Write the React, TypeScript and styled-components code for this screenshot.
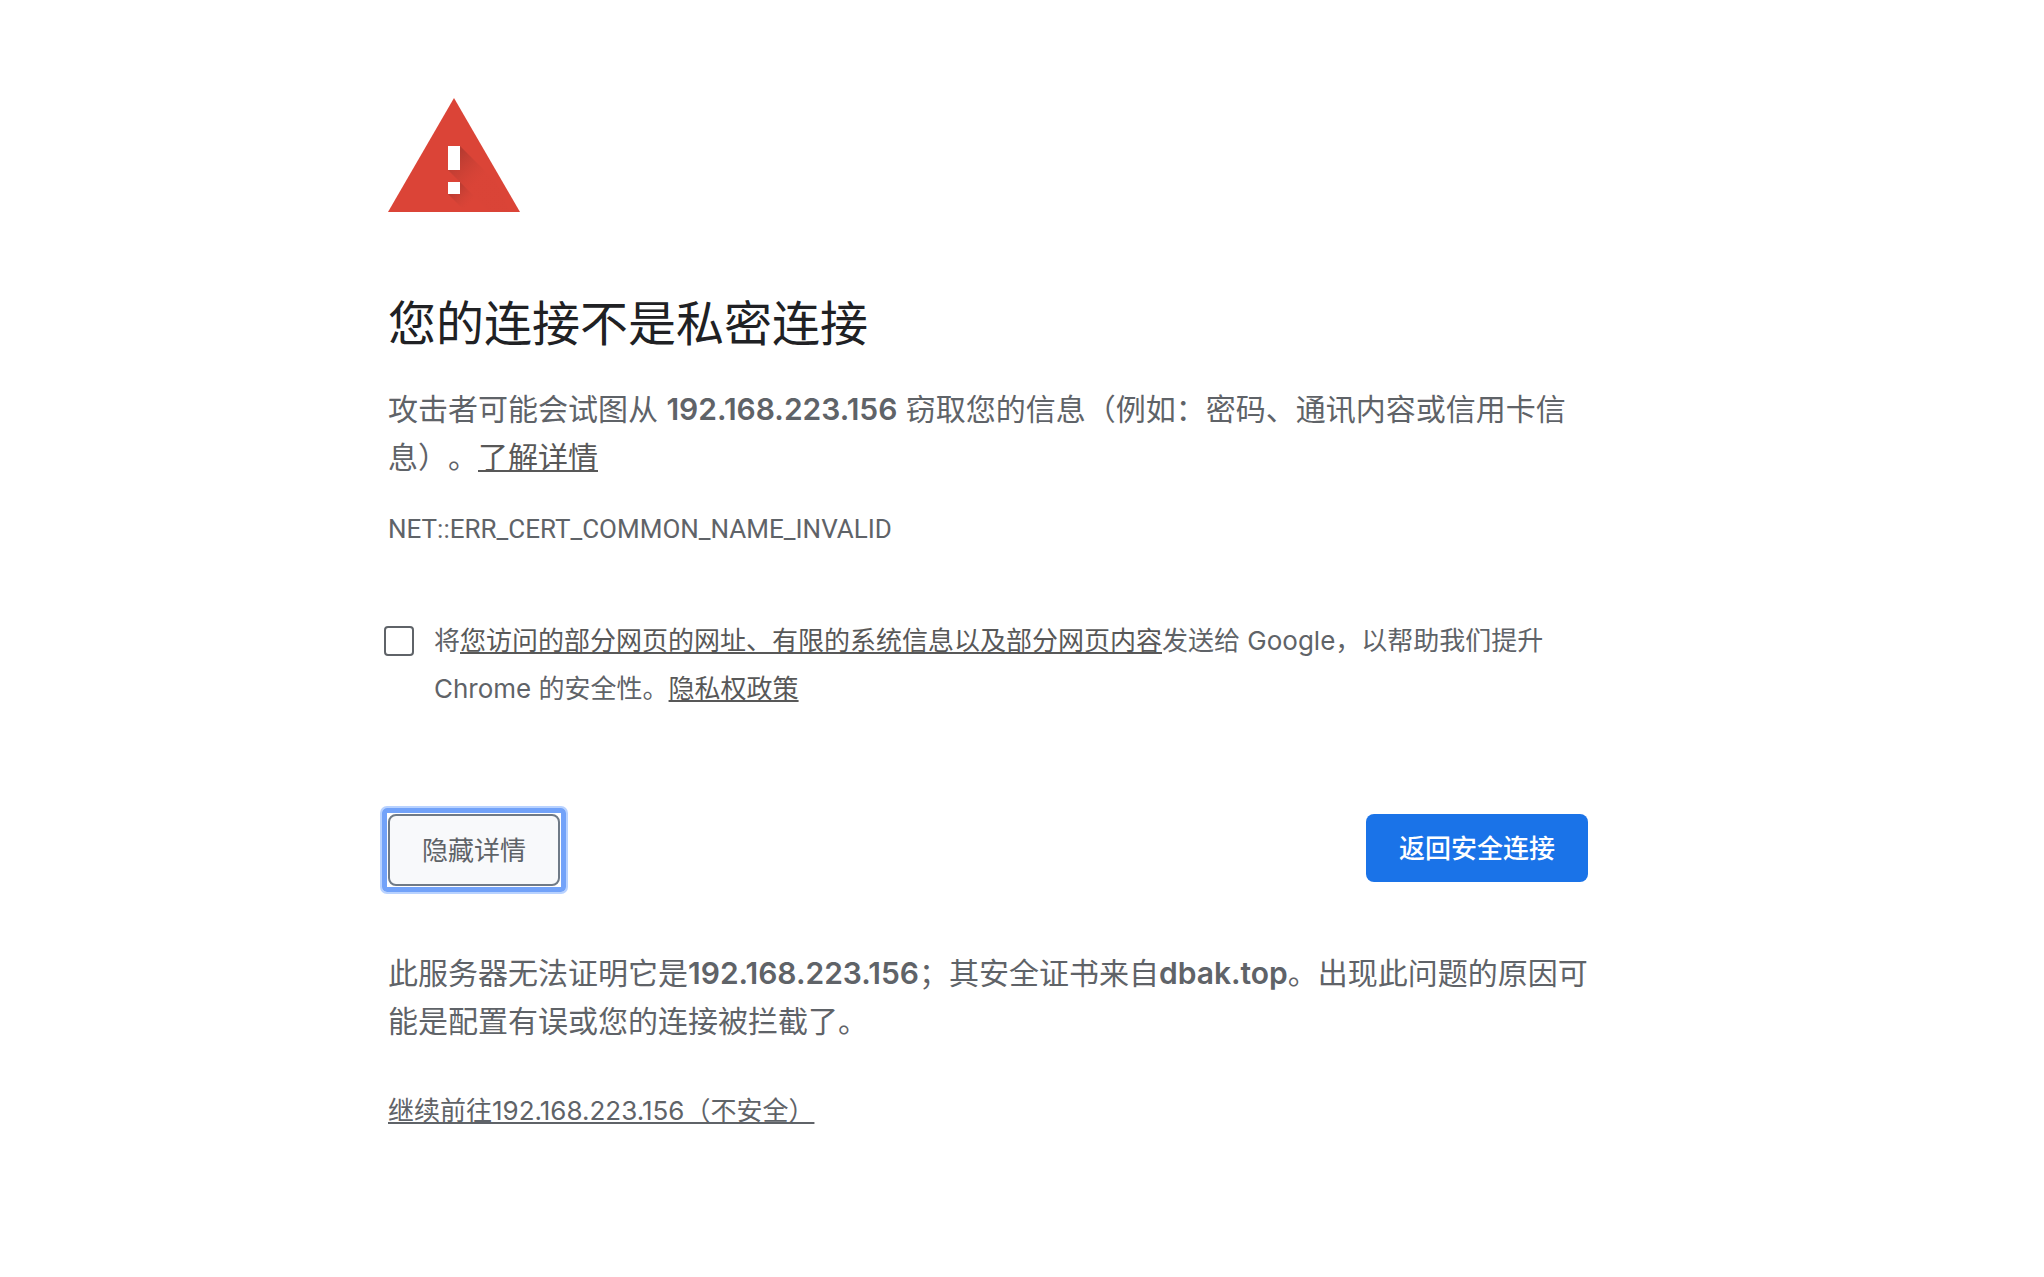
import React, { useState } from 'react';
import styled, { createGlobalStyle } from 'styled-components';

const GlobalStyle = createGlobalStyle`
  *, *::before, *::after { box-sizing: border-box; }
  body {
    margin: 0;
    background: #fff;
    color: #5f6368;
    font-family: Inter, 'Noto Sans CJK SC', sans-serif;
    font-size: 30px;
    line-height: 48px;
    text-spacing-trim: space-all;
  }
`;

const Page = styled.div`
  padding: 98px 68px 48px 0;
`;

const Content = styled.main`
  max-width: 1200px;
  margin: 0 auto;
`;

const WarningIcon = styled.svg`
  display: block;
  width: 132px;
  height: 114px;
`;

const Title = styled.h1`
  margin: 82px 0 31px;
  color: #202124;
  font-size: 48px;
  font-weight: 400;
  line-height: 60px;
`;

const Paragraph = styled.p`
  margin: 0;
`;

const Strong = styled.strong`
  font-weight: 600;
`;

const ErrorCode = styled.div`
  margin-top: 24px;
  font-family: Roboto, 'Noto Sans CJK SC', sans-serif;
  font-size: 26px;
`;

const Link = styled.a`
  color: #585858;
  text-decoration: underline;
  text-decoration-thickness: 2px;
  text-decoration-skip-ink: none;
  text-underline-offset: 2px;
`;

const OptIn = styled.div`
  display: flex;
  align-items: flex-start;
  gap: 20px;
  margin: 64px 0 0 -4px;
  font-size: 26px;
`;

const Checkbox = styled.input`
  appearance: none;
  flex: none;
  width: 30px;
  height: 30px;
  margin: 9px 0 0;
  border: 2px solid #5f6368;
  border-radius: 4px;
  background: #fff;

  &:checked {
    background: #1a73e8;
  }
`;

const Actions = styled.div`
  display: flex;
  align-items: flex-start;
  justify-content: space-between;
  margin-top: 101px;
`;

const Button = styled.button`
  padding: 11px 33px 9px;
  border: 0;
  border-radius: 8px;
  background: #1a73e8;
  color: #fff;
  font: inherit;
  font-size: 26px;
  font-weight: 500;
  line-height: 48px;
  cursor: pointer;
`;

const DetailsButton = styled(Button)`
  position: relative;
  padding: 11px 32px 9px;
  border: 2px solid #6f7a87;
  background: #f8f9fb;
  color: #5f6368;
  font-weight: 400;
  outline: 0;

  &::after {
    content: '';
    position: absolute;
    inset: -8px;
    border: 5px solid #72a2f9;
    border-radius: 5px;
    box-shadow: 0 0 0 2px #b8d2ff;
  }
`;

const Details = styled.section`
  margin-top: 63px;
`;

const Proceed = styled.p`
  margin: 42px 0 0;
  font-size: 26px;

  a {
    color: #5f6368;
  }
`;

export default function App() {
  const [open, setOpen] = useState(true);

  return (
    <Page lang="zh-CN">
      <GlobalStyle />
      <Content>
        <WarningIcon viewBox="0 0 132 114" aria-hidden="true">
          <defs>
            <linearGradient id="shade" gradientUnits="userSpaceOnUse" x1="66" y1="60" x2="90" y2="84">
              <stop offset="0" stopColor="#b23a30" stopOpacity="0.9" />
              <stop offset="1" stopColor="#d04236" stopOpacity="0.1" />
            </linearGradient>
            <linearGradient id="dotShade" gradientUnits="userSpaceOnUse" x1="66" y1="90" x2="82" y2="106">
              <stop offset="0" stopColor="#b23a30" stopOpacity="0.9" />
              <stop offset="1" stopColor="#d04236" stopOpacity="0" />
            </linearGradient>
          </defs>
          <path d="M66 0 132 114H0Z" fill="#db4437" />
          <path d="M72 48 108 84 122 114H102L60 72Z" fill="url(#shade)" />
          <path d="M72 84 102 114H78L60 96Z" fill="url(#dotShade)" />
          <path d="M60 48h12v24H60zM60 84h12v12H60z" fill="#fff" />
        </WarningIcon>

        <Title>您的连接不是私密连接</Title>
        <Paragraph>
          攻击者可能会试图从 <Strong>192.168.223.156</Strong>{' '}
          窃取您的信息（例如：密码、通讯内容或信用卡信息）。<Link href="#learn-more">了解详情</Link>
        </Paragraph>
        <ErrorCode>NET::ERR_CERT_COMMON_NAME_INVALID</ErrorCode>

        <OptIn>
          <Checkbox type="checkbox" id="opt-in" />
          <label htmlFor="opt-in">
            将<Link href="#report">您访问的部分网页的网址、有限的系统信息以及部分网页内容</Link>发送给 Google，以帮助我们提升
            Chrome 的安全性。<Link href="#privacy">隐私权政策</Link>
          </label>
        </OptIn>

        <Actions>
          <DetailsButton type="button" aria-expanded={open} onClick={() => setOpen(!open)}>
            隐藏详情
          </DetailsButton>
          <Button type="button">返回安全连接</Button>
        </Actions>

        {open && (
          <Details>
            <Paragraph>
              此服务器无法证明它是<Strong>192.168.223.156</Strong>；其安全证书来自<Strong>dbak.top</Strong>。出现此问题的原因可能是配置有误或您的连接被拦截了。
            </Paragraph>
            <Proceed>
              <Link href="#proceed">继续前往192.168.223.156（不安全）</Link>
            </Proceed>
          </Details>
        )}
      </Content>
    </Page>
  );
}
